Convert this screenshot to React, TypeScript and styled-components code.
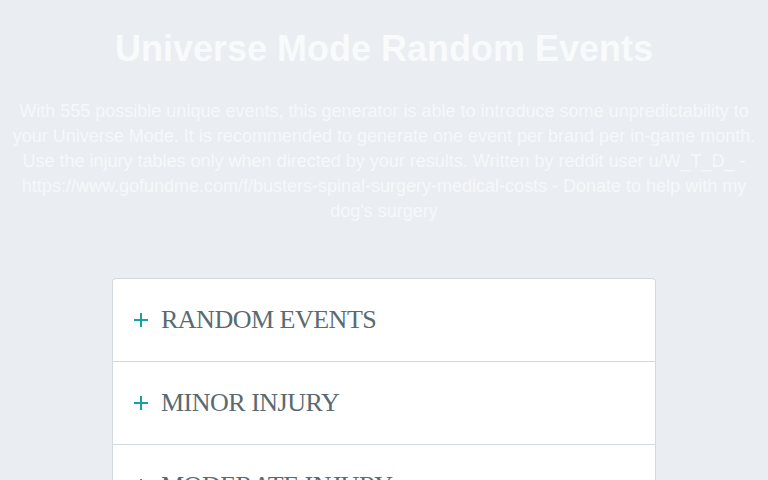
import styled, { createGlobalStyle } from "styled-components";

const GlobalStyle = createGlobalStyle`
  html, body {
    margin: 0;
    padding: 0;
    background: #eaeef2;
  }
  body {
    font-family: "Liberation Sans", Arial, sans-serif;
  }
`;

export const Page = styled.div`
  display: flex;
  flex-direction: column;
  align-items: center;
  padding: 27px 12px 0;
`;

export const Title = styled.h1`
  margin: 0;
  font-size: 36px;
  line-height: 44px;
  font-weight: 700;
  color: #f8fafb;
  text-align: center;
`;

export const Intro = styled.p`
  margin: 28px 0 0;
  font-size: 18px;
  line-height: 25px;
  color: #f6f8fa;
  text-align: center;
`;

export const Accordion = styled.div`
  margin-top: 54px;
  width: 542px;
  background: #fff;
  border: 1px solid #d3d8dc;
  border-radius: 4px;
`;

export const Item = styled.div`
  height: 82px;
  display: flex;
  align-items: center;
  padding: 0 20px;
  border-top: 1px solid #d3d8dc;
  &:first-child {
    border-top: none;
  }
`;

export const Plus = styled.span`
  width: 16px;
  height: 16px;
  margin-right: 12px;
  display: flex;
  > svg {
    width: 16px;
    height: 16px;
  }
`;

export const ItemLabel = styled.span`
  font-family: "Liberation Serif", "Times New Roman", serif;
  font-size: 26px;
  color: #596a72;
  letter-spacing: -0.5px;
`;

const sections = ["RANDOM EVENTS", "MINOR INJURY", "MODERATE INJURY", "MAJOR INJURY"];

export default function App() {
  return (
    <>
      <GlobalStyle />
      <Page>
        <Title>Universe Mode Random Events</Title>
        <Intro>
          With 555 possible unique events, this generator is able to introduce some
          unpredictability to your Universe Mode. It is recommended to generate one event
          per brand per in-game month. Use the injury tables only when directed by your
          results. Written by reddit user u/W_T_D_ -
          https://www.gofundme.com/f/busters-spinal-surgery-medical-costs - Donate to help
          with my dog's surgery
        </Intro>
        <Accordion>
          {sections.map((s) => (
            <Item key={s}>
              <Plus>
                <svg viewBox="0 0 16 16">
                  <path d="M8 1v14M1 8h14" stroke="#1a9fa8" strokeWidth="2" fill="none" />
                </svg>
              </Plus>
              <ItemLabel>{s}</ItemLabel>
            </Item>
          ))}
        </Accordion>
      </Page>
    </>
  );
}
